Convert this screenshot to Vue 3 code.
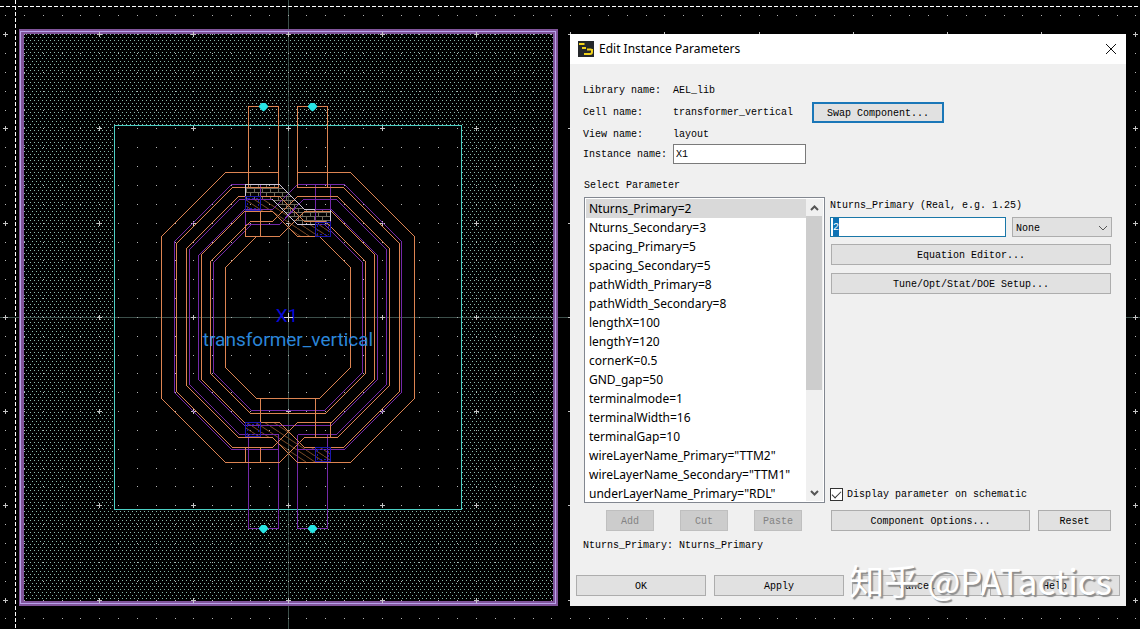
<script setup>
import { ref, onMounted } from 'vue'

const CX = 288.1
const CY = 317.4
const STEP = 94.2

function line(from, to) {
  return `M${from[0]} ${from[1]}L${to[0]} ${to[1]}`
}

function buildGrid() {
  let dots = ''
  let marks = ''
  for (let i = -15; i <= 90; i++) {
    const x = Math.floor(CX + (i * STEP) / 5)
    for (let j = -16; j <= 50; j++) {
      const y = Math.floor(CY + (j * STEP) / 5)
      if (i % 5 === 0 && j % 5 === 0) marks += `M${x - 2} ${y + 0.5}h5M${x + 0.5} ${y - 2}v5`
      else dots += `M${x} ${y + 0.5}h1`
    }
  }
  return { dots, marks }
}
const grid = buildGrid()

// left x, top y, bottom y, chamfer, inner end of the top run, inner end of the bottom run
const primary = [
  [161.5, 172.5, 462.5, 64, 278.5, 279.5],
  [176.5, 187.5, 447.5, 56, 278.5, 272.5],
  [186.5, 196.5, 437.5, 52, 279.5, 272.5],
  [201.5, 211.5, 422.5, 43, 272.5, 279.5],
  [210.5, 221.5, 413.5, 40, 272.5, 288.5],
  [225.5, 236.5, 398.5, 31, 279.5, 288.5]
]
const secondary = [
  [174.5, 184.5, 449.5, 57, 278.5, 278.5],
  [189.5, 199.5, 434.5, 50, 272.5, 278.5],
  [198.5, 209.5, 425.5, 46, 272.5, 288.5],
  [213.5, 224.5, 410.5, 38, 279.5, 288.5]
]
function halfRings(rings) {
  return rings
    .map(([x, t, b, c, te, be]) => {
      const m = (v) => 576 - v
      const left = `M${te} ${t}H${x + c}L${x} ${t + c}V${b - c}L${x + c} ${b}H${be}`
      const right = `M${m(te)} ${t}H${m(x + c)}L${m(x)} ${t + c}V${b - c}L${m(x + c)} ${b}H${m(be)}`
      return left + right
    })
    .join('')
}
const primaryPath = halfRings(primary)
const secondaryPath = halfRings(secondary)
const crossing = [
  line([279.5, 196.5], [304.5, 221.5]),
  line([297.5, 196.5], [272.5, 221.5]),
  line([272.5, 211.5], [297.5, 236.5]),
  line([304.5, 211.5], [279.5, 236.5]),
  line([279.5, 422.5], [304.5, 447.5]),
  line([297.5, 422.5], [272.5, 447.5]),
  line([272.5, 437.5], [297.5, 462.5]),
  line([304.5, 437.5], [279.5, 462.5])
].join('')
const pins = [[263.5, 106.5], [312.5, 106.5], [263.5, 528.5], [312.5, 528.5]]
const vias = [[245.5, 196.5], [315.5, 222.5], [245.5, 422.5], [315.5, 447.5]]

const params = [
  'Nturns_Primary=2', 'Nturns_Secondary=3', 'spacing_Primary=5', 'spacing_Secondary=5',
  'pathWidth_Primary=8', 'pathWidth_Secondary=8', 'lengthX=100', 'lengthY=120',
  'cornerK=0.5', 'GND_gap=50', 'terminalmode=1', 'terminalWidth=16', 'terminalGap=10',
  'wireLayerName_Primary="TTM2"', 'wireLayerName_Secondary="TTM1"', 'underLayerName_Primary="RDL"'
]
const selected = ref(0)
const instanceName = ref('X1')
const value = ref('2')
const mode = ref('None')
const display = ref(true)
const valueBox = ref(null)

onMounted(() => {
  valueBox.value.focus()
  valueBox.value.select()
})
</script>

<template>
  <main class="desktop">
    <svg class="layout-view" aria-label="Layout of X1">
      <defs>
        <pattern id="stipple" width="4" height="6" patternUnits="userSpaceOnUse">
          <rect x="0" y="1" width="1" height="1" fill="#8ab8ac" />
          <rect x="2" y="4" width="1" height="1" fill="#8ab8ac" />
        </pattern>
        <pattern id="brick" width="8" height="8" patternUnits="userSpaceOnUse">
          <path d="M0 .5H8M0 4.5H8M2.5 0V4M6.5 4V8" stroke="#6f6a5c" fill="none" />
        </pattern>
        <pattern id="hatch" width="9" height="6" patternUnits="userSpaceOnUse">
          <path d="M0 0L9 6" stroke="#7a4a26" fill="none" />
        </pattern>
      </defs>
      <path d="M21 31H555V603H21ZM114 125V510H462V125Z" fill="url(#stipple)" fill-rule="evenodd" />
      <g fill="none" shape-rendering="crispEdges">
        <path d="M288.5 0V2000M0 317.5H3000" stroke="#3c4f4a" />
        <rect x="21" y="31" width="534" height="572" stroke="#80549a" stroke-width="5" />
        <rect x="20.5" y="31.5" width="535" height="572" stroke="#b9a3ea" />
        <rect x="114.5" y="125.5" width="347" height="384" stroke="#4ccfc4" />
        <path d="M0 6.5H3000M15.5 0V2000" stroke="#fff" stroke-dasharray="4 2" />
        <path :d="grid.dots" stroke="#b4b4b4" />
        <path :d="grid.marks" stroke="#c4c4c4" />
      </g>
      <g fill="none">
        <path d="M245.5 184.5H279.5L304.5 209.5H330.5V224.5H297.5L272.5 199.5H245.5Z" fill="url(#brick)" />
        <path d="M245.5 199.5H272.5L297.5 224.5H330.5V236.5H297.5L272.5 211.5H245.5Z" fill="url(#hatch)" />
        <path d="M245.5 422.5H279.5L304.5 447.5H330.5V462.5H297.5L272.5 437.5H245.5Z" fill="url(#hatch)" />
        <g stroke="#7429a8" shape-rendering="crispEdges">
          <path :d="secondaryPath" />
          <path d="M245.5 184.5V236.5M260.5 184.5V224.5M315.5 184.5V224.5M330.5 184.5V224.5M245.5 224.5H279.5M272.5 209.5L297.5 184.5M279.5 224.5L303.5 199.5" />
          <path d="M248.5 434.5V528.5H278.5V434.5M297.5 434.5V528.5H327.5V434.5M260.5 398.5V425.5" />
        </g>
        <g stroke="#dd8452" shape-rendering="crispEdges">
          <path :d="primaryPath" />
          <path :d="crossing" />
          <path d="M248.5 187.5V106.5H278.5V187.5M297.5 187.5V106.5H327.5V187.5" />
          <path d="M245.5 224.5V236.5H279.5M260.5 211.5V236.5M297.5 236.5H330.5" />
          <path d="M260.5 398.5V422.5M315.5 398.5V437.5M330.5 422.5V437.5M245.5 447.5V462.5M260.5 447.5V462.5" />
        </g>
        <path d="M245.5 196V184.5H279.5L304.5 209.5H315M330.5 209.5V221M272.5 199.5L297.5 224.5H315" stroke="#cfc7dc" shape-rendering="crispEdges" />
        <g stroke="#1c18ad" shape-rendering="crispEdges">
          <g v-for="(v, i) in vias" :key="i">
            <rect :x="v[0]" :y="v[1]" width="15" height="14" />
            <rect :x="v[0] + 2" :y="v[1] + 2" width="11" height="10" stroke-dasharray="2 2" />
          </g>
        </g>
        <g fill="#27e6e6">
          <path v-for="(p, i) in pins" :key="i" :d="`M${p[0] - 2} ${p[1] - 3.5}H${p[0] + 2}L${p[0] + 5} ${p[1]}L${p[0] + 2} ${p[1] + 3.5}L${p[0]} ${p[1] + 5}L${p[0] - 2} ${p[1] + 3.5}L${p[0] - 5} ${p[1]}Z`" />
        </g>
      </g>
      <text class="ref-name" x="287" y="322">X1</text>
      <text class="cell-name" x="288" y="346">transformer_vertical</text>
      <path d="M284 317.5H293M288.5 313V322" stroke="#d8d8d8" shape-rendering="crispEdges" />
    </svg>

    <section class="dialog" role="dialog" aria-labelledby="dialog-title">
      <header class="titlebar">
        <svg class="app-icon" width="16" height="16" viewBox="0 0 16 16" aria-hidden="true">
          <rect width="16" height="16" fill="#25282b" />
          <path d="M1 3H6.500M4 7H8M9 8.500H13.500M6 13H12Q14 13 14 11V8" fill="none" stroke="#f2d31b" stroke-width="2" />
        </svg>
        <h1 id="dialog-title">Edit Instance Parameters</h1>
        <button class="close" type="button" aria-label="Close">
          <svg width="12" height="12" viewBox="0 0 12 12"><path d="M1 1L11 11M11 1L1 11" stroke="#111" fill="none" /></svg>
        </button>
      </header>

      <form class="body" @submit.prevent>
        <div class="facts">
          <span>Library name:</span><span>AEL_lib</span><span></span>
          <span>Cell name:</span><span>transformer_vertical</span>
          <button type="button" class="btn swap">Swap Component...</button>
          <span>View name:</span><span>layout</span><span></span>
          <label for="instance">Instance name:</label>
          <input id="instance" v-model="instanceName" class="field" type="text" />
        </div>

        <div class="editor">
          <div class="left">
            <div id="select-label" class="select-label">Select Parameter</div>
            <div class="listbox">
              <ul role="listbox" aria-labelledby="select-label">
                <li v-for="(p, i) in params" :key="p" role="option" :aria-selected="i === selected" :class="{ active: i === selected }" @click="selected = i">{{ p }}</li>
              </ul>
              <div class="scrollbar">
                <button type="button" aria-label="Scroll up"><svg width="9" height="6" viewBox="0 0 9 6"><path d="M1 5L4.500 1.500L8 5" /></svg></button>
                <div class="track"><div class="thumb"></div></div>
                <button type="button" aria-label="Scroll down"><svg width="9" height="6" viewBox="0 0 9 6"><path d="M1 1L4.500 4.500L8 1" /></svg></button>
              </div>
            </div>
            <div class="edit-actions">
              <button type="button" class="btn" disabled>Add</button>
              <button type="button" class="btn" disabled>Cut</button>
              <button type="button" class="btn" disabled>Paste</button>
            </div>
          </div>

          <div class="right">
            <label class="value-label" for="value">Nturns_Primary (Real, e.g. 1.25)</label>
            <div class="value-row">
              <input id="value" ref="valueBox" v-model="value" class="field focus" type="text" />
              <div class="combo">
                <select v-model="mode" aria-label="Value mode"><option>None</option></select>
                <svg width="10" height="6" viewBox="0 0 10 6" aria-hidden="true"><path d="M1 1L5 5L9 1" /></svg>
              </div>
            </div>
            <div class="stack">
              <button type="button" class="btn">Equation Editor...</button>
              <button type="button" class="btn">Tune/Opt/Stat/DOE Setup...</button>
            </div>
            <label class="check"><input v-model="display" type="checkbox" /><span>Display parameter on schematic</span></label>
            <div class="option-row">
              <button type="button" class="btn wide">Component Options...</button>
              <button type="button" class="btn">Reset</button>
            </div>
          </div>
        </div>

        <p class="status">Nturns_Primary: Nturns_Primary</p>
        <footer class="actions">
          <button type="submit" class="btn">OK</button>
          <button type="button" class="btn">Apply</button>
          <button type="button" class="btn">Cancel</button>
          <button type="button" class="btn">Help</button>
        </footer>
      </form>
      <div class="watermark">知乎 @PATactics</div>
    </section>
  </main>
</template>

<style>
body {
  margin: 0;
  background: #000;
}
</style>

<style scoped>
* {
  box-sizing: border-box;
}
.desktop {
  position: relative;
  min-height: 100vh;
  overflow: hidden;
  background: #000;
}
.layout-view {
  position: absolute;
  inset: 0;
  width: 100%;
  height: 100%;
}
.ref-name,
.cell-name {
  font-family: Roboto, sans-serif;
  font-size: 19px;
  text-anchor: middle;
  fill: #2b86d9;
}
.ref-name {
  fill: #0808d8;
}
.dialog {
  position: absolute;
  top: 34px;
  left: 50%;
  right: 14px;
  background: #f0f0f0;
  color: #000;
  font: 10px/20px "Liberation Mono", monospace;
}
.titlebar {
  display: flex;
  align-items: center;
  gap: 5px;
  height: 30px;
  padding: 0 8px;
  background: #fff;
}
h1 {
  flex: 1;
  margin: 0;
  font: 12px/18px "Noto Sans", sans-serif;
}
button,
input,
select {
  font: inherit;
  color: inherit;
}
.close {
  display: flex;
  padding: 1px;
  border: 0;
  background: none;
}
.body {
  padding: 15px 6px 10px;
}
.facts {
  display: grid;
  grid-template-columns: 90px 133px 132px;
  grid-template-rows: 22px 22px 21px 20px;
  align-items: center;
  padding-left: 7px;
}
.facts span,
.facts label {
  padding-top: 2px;
}
.btn {
  height: 21px;
  padding: 1px 0 0;
  border: 1px solid #adadad;
  background: #e1e1e1;
  line-height: 19px;
  text-align: center;
}
.btn:disabled {
  border-color: #bfbfbf;
  background: #ccc;
  color: #838383;
}
.swap {
  margin-left: 6px;
  width: 132px;
  border: 2px solid #1a77b8;
  line-height: 17px;
}
.field {
  width: 100%;
  min-width: 0;
  height: 20px;
  padding: 1px 2px 0;
  border: 1px solid #7a7a7a;
  border-radius: 0;
  outline: 0;
  background: #fff;
}
.field.focus {
  flex: 1;
  border-color: #1a77a8;
}
.field::selection {
  background: #0e72b5;
  color: #fff;
}
.editor {
  display: flex;
  gap: 5px;
  padding: 11px 8px 0;
}
.left {
  width: 241px;
}
.select-label {
  height: 22px;
  padding-top: 1px;
}
.listbox {
  display: flex;
  height: 306px;
  border: 1px solid #828790;
  padding: 1px;
  background: #fff;
}
ul {
  flex: 1;
  min-width: 0;
  margin: 0;
  padding: 0;
  overflow: hidden;
  list-style: none;
  font: 12px/19px "Noto Sans", sans-serif;
}
li {
  height: 19px;
  padding-left: 3px;
  white-space: nowrap;
}
li.active {
  background: #d9d9d9;
}
.scrollbar {
  display: flex;
  flex-direction: column;
  width: 17px;
  background: #f0f0f0;
}
.scrollbar button {
  display: flex;
  align-items: center;
  justify-content: center;
  height: 17px;
  padding: 0;
  border: 0;
  background: none;
}
.scrollbar path {
  fill: none;
  stroke: #555;
  stroke-width: 2;
}
.track {
  flex: 1;
}
.thumb {
  height: 65%;
  margin-right: 1px;
  background: #cdcdcd;
}
.edit-actions {
  display: flex;
  gap: 26px;
  padding: 7px 22px 0;
}
.edit-actions .btn {
  width: 48px;
}
.right {
  display: flex;
  flex: 1;
  flex-direction: column;
  min-width: 0;
}
.value-label {
  padding-top: 21px;
  height: 42px;
}
.value-row {
  display: flex;
  gap: 6px;
  height: 20px;
}
.combo {
  position: relative;
  width: 100px;
}
.combo select {
  display: block;
  width: 100%;
  height: 20px;
  padding: 1px 3px 0;
  border: 1px solid #adadad;
  border-radius: 0;
  background: #e1e1e1;
  appearance: none;
}
.combo svg {
  position: absolute;
  right: 4px;
  top: 8px;
  pointer-events: none;
}
.combo path {
  fill: none;
  stroke: #555;
}
.stack {
  display: flex;
  flex-direction: column;
  gap: 8px;
  padding: 7px 1px 0;
}
.check {
  display: flex;
  align-items: center;
  gap: 4px;
  margin-top: auto;
}
.check span {
  padding-top: 1px;
}
.check input {
  width: 13px;
  height: 13px;
  margin: 0;
  border: 1px solid #333;
  background: #fff;
  appearance: none;
}
.check input:checked::before {
  content: "";
  display: block;
  width: 8px;
  height: 4px;
  margin: 2px 1px;
  border: solid #333;
  border-width: 0 0 1px 1px;
  transform: rotate(-45deg);
}
.option-row {
  display: flex;
  gap: 8px;
  padding: 5px 1px 0;
}
.option-row .btn {
  width: 73px;
}
.option-row .wide {
  flex: 1;
}
.status {
  margin: 4px 0 20px;
  padding: 1px 0 0 7px;
  height: 20px;
}
.actions {
  display: grid;
  grid-template-columns: repeat(4, 1fr);
  gap: 8px;
}
.watermark {
  position: absolute;
  right: 14px;
  bottom: 4px;
  color: #fff;
  font: 400 35px/44px "Noto Sans CJK SC", sans-serif;
  text-shadow: 2px 2px 1px #8c8c8c;
  white-space: nowrap;
  pointer-events: none;
}
</style>
